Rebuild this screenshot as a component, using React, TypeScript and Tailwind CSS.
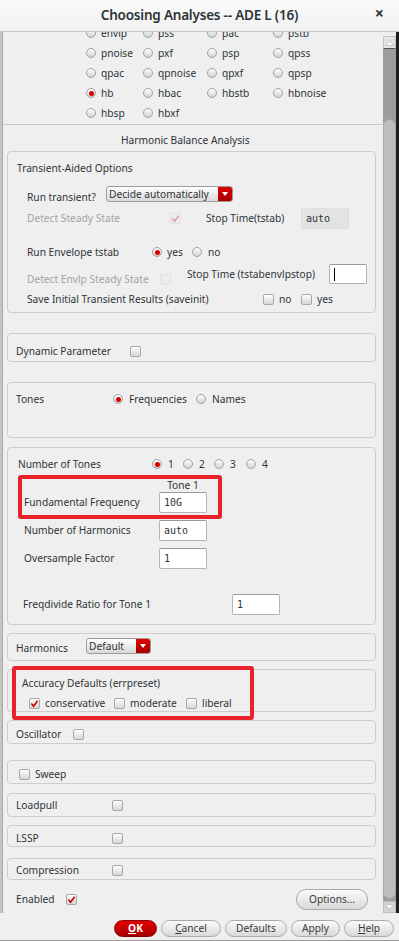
import React from "react";
import clsx from "clsx";

const Radio = ({ on }: { on?: boolean }) => (
  <span className="w-[10px] h-[10px] rounded-full border border-[#a2a2a2] bg-linear-to-b from-white to-[#d2d2d2] flex items-center justify-center shrink-0">
    {on && <span className="w-[5px] h-[5px] rounded-full bg-[#d40000]" />}
  </span>
);

const Check = ({ on, dim }: { on?: boolean; dim?: boolean }) => (
  <span
    className={clsx(
      "w-[11px] h-[11px] rounded-[2px] border flex items-center justify-center shrink-0",
      dim
        ? "border-[#e0e0e0] bg-[#ececec]"
        : "border-[#a8a8a8] bg-linear-to-b from-white to-[#d6d6d6]"
    )}
  >
    {on && (
      <svg width="10" height="9" viewBox="0 0 10 9">
        <path
          d="M1.5 4.5 L4 7.5 L8.5 1.5"
          stroke={dim ? "#d6a3a3" : "#cc0000"}
          strokeWidth="1.8"
          fill="none"
        />
      </svg>
    )}
  </span>
);

const Field = ({
  value,
  className,
  mono,
  disabled,
  cursor,
}: {
  value?: string;
  className: string;
  mono?: boolean;
  disabled?: boolean;
  cursor?: boolean;
}) => (
  <span
    className={clsx(
      "flex items-center pl-[4px] rounded-[2px] border shrink-0",
      disabled
        ? "bg-[#e3e3e3] border-[#dedede]"
        : "bg-white border-[#b4b4b4] border-t-[#9a9a9a]",
      mono && "font-['DejaVu_Sans_Mono',monospace] text-[10px]",
      className
    )}
  >
    {value}
    {cursor && <span className="w-px h-[13px] bg-black" />}
  </span>
);

const Dropdown = ({ label, className }: { label: string; className: string }) => (
  <span
    className={clsx(
      "flex items-stretch rounded-[3px] border border-[#9c9c9c] bg-linear-to-b from-white to-[#d8d8d8] overflow-hidden shrink-0",
      className
    )}
  >
    <span className="flex-1 pl-[2px] leading-[14px]">{label}</span>
    <span className="w-[14px] bg-linear-to-b from-[#de0000] to-[#a80000] flex items-center justify-center">
      <svg width="6" height="4" viewBox="0 0 6 4">
        <path d="M0 0 H6 L3 4 Z" fill="white" />
      </svg>
    </span>
  </span>
);

const Box = ({ className, children }: { className?: string; children: React.ReactNode }) => (
  <div className={clsx("relative ml-[4px] w-[369px] border border-[#cdcdcd] rounded-[4px]", className)}>
    {children}
  </div>
);

const Pill = ({ children, className }: { children: React.ReactNode; className?: string }) => (
  <span
    className={clsx(
      "h-[17px] flex items-center justify-center rounded-full border border-[#a9a9a9] bg-linear-to-b from-[#fbfbfb] to-[#d9d9d9] text-[#3a3a3a]",
      className
    )}
  >
    {children}
  </span>
);

const grid = [
  ["envlp", "pss", "pac", "pstb"],
  ["pnoise", "pxf", "psp", "qpss"],
  ["qpac", "qpnoise", "qpxf", "qpsp"],
  ["hb", "hbac", "hbstb", "hbnoise"],
  ["hbsp", "hbxf"],
];

export default function App() {
  return (
    <div className="w-[399px] h-[941px] bg-[#efefef] font-['Noto_Sans',sans-serif] text-[10.2px] leading-[15px] text-[#2e3436] overflow-hidden">
      {/* title bar */}
      <div className="h-[32px] flex items-center justify-center relative bg-linear-to-b from-[#fafafa] to-[#f1f1f1] border-b border-[#c6c6c6]">
        <span className="text-[13.5px] font-semibold text-[#2e3436] tracking-[-0.2px]">
          Choosing Analyses -- ADE L (16)
        </span>
        <span className="absolute right-[15px] top-[6px] text-[16px] font-bold">×</span>
      </div>

      <div className="flex h-[881px]">
        <div className="w-[3px] bg-[#c4c4c4] border-r border-[#a9a9a9]" />

        {/* scroll content */}
        <div className="w-[380px] overflow-hidden flex flex-col">
          <div className="-mt-[9px] pl-[83px]">
            {grid.map((row, i) => (
              <div key={i} className="grid grid-cols-[57px_64px_66px_80px] h-[20px]">
                {row.map((name) => (
                  <span key={name} className="flex items-center gap-[5px]">
                    <Radio on={name === "hb"} />
                    {name}
                  </span>
                ))}
              </div>
            ))}
          </div>
          <div className="mt-[1px] h-px bg-[#c9c9c9]" />
          <div className="h-[26px] pt-[8px] pl-[118px]">Harmonic Balance Analysis</div>

          {/* transient-aided options */}
          <Box className="pt-[9px] pb-[5px]">
            <div className="pl-[9px] h-[16px]">Transient-Aided Options</div>
            <div className="pl-[19px] mt-[8px] flex items-start">
              <span className="w-[79px] mt-[5px]">Run transient?</span>
              <Dropdown label="Decide automatically" className="w-[127px] h-[16px] mt-[1px]" />
            </div>
            <div className="pl-[19px] mt-[3px] flex items-center h-[21px]">
              <span className="w-[143px] text-[#a3a3a3]">Detect Steady State</span>
              <Check on dim />
              <span className="ml-[25px] w-[95px]">Stop Time(tstab)</span>
              <Field value="auto" mono disabled className="w-[48px] h-[21px]" />
            </div>
            <div className="pl-[19px] mt-[15px] flex items-center h-[16px]">
              <span className="w-[125px]">Run Envelope tstab</span>
              <Radio on />
              <span className="ml-[5px] w-[25px]">yes</span>
              <Radio />
              <span className="ml-[6px]">no</span>
            </div>
            <div className="pl-[19px] mt-[4px] flex items-start">
              <span className="w-[133px] mt-[8px] text-[#a3a3a3]">Detect Envlp Steady State</span>
              <span className="mt-[10px]">
                <Check dim />
              </span>
              <span className="ml-[16px] w-[142px] mt-[3px]">Stop Time (tstabenvlpstop)</span>
              <Field cursor className="w-[38px] h-[20px]" />
            </div>
            <div className="pl-[19px] mt-[4px] flex items-center h-[16px]">
              <span className="w-[236px]">Save Initial Transient Results (saveinit)</span>
              <Check />
              <span className="ml-[5px] w-[22px]">no</span>
              <Check />
              <span className="ml-[5px]">yes</span>
            </div>
          </Box>

          <Box className="mt-[20px] pt-[9px] pb-[2px] pl-[8px]">
            <div className="flex items-center h-[16px]">
              <span className="w-[114px]">Dynamic Parameter</span>
              <Check />
            </div>
          </Box>

          <Box className="mt-[20px] pt-[8px] pb-[30px] pl-[8px]">
            <div className="flex items-center h-[16px]">
              <span className="w-[97px]">Tones</span>
              <Radio on />
              <span className="ml-[6px] w-[67px]">Frequencies</span>
              <Radio />
              <span className="ml-[6px]">Names</span>
            </div>
          </Box>

          {/* tones */}
          <Box className="mt-[9px] pt-[8px] pb-[9px]">
            <div className="pl-[10px] flex items-center h-[16px]">
              <span className="w-[134px]">Number of Tones</span>
              <Radio on />
              <span className="ml-[6px] w-[15px]">1</span>
              <Radio />
              <span className="ml-[6px] w-[15px]">2</span>
              <Radio />
              <span className="ml-[6px] w-[16px]">3</span>
              <Radio />
              <span className="ml-[6px]">4</span>
            </div>
            <div className="pl-[151px] mt-[7px] h-[13px] leading-[13px]">
              <span className="block w-[48px] text-center">Tone 1</span>
            </div>
            <div className="pl-[16px] flex items-center">
              <span className="w-[135px]">Fundamental Frequency</span>
              <Field value="10G" mono className="w-[48px] h-[21px]" />
            </div>
            <div className="pl-[16px] mt-[7px] flex items-center">
              <span className="w-[135px]">Number of Harmonics</span>
              <Field value="auto" mono className="w-[48px] h-[21px]" />
            </div>
            <div className="pl-[16px] mt-[7px] flex items-center">
              <span className="w-[135px]">Oversample Factor</span>
              <Field value="1" mono className="w-[48px] h-[21px]" />
            </div>
            <div className="pl-[15px] mt-[25px] flex items-center">
              <span className="w-[209px]">Freqdivide Ratio for Tone 1</span>
              <Field value="1" mono className="w-[48px] h-[21px]" />
            </div>
            <div className="absolute left-[10px] top-[27px] w-[204px] h-[44px] border-[4px] border-[#e8232d] rounded-[3px]" />
          </Box>

          <Box className="mt-[8px] pb-[4px] pl-[8px]">
            <div className="flex items-start">
              <span className="w-[70px] mt-[7px]">Harmonics</span>
              <Dropdown label="Default" className="w-[65px] h-[16px] mt-[4px]" />
            </div>
          </Box>

          <Box className="mt-[8px] z-10 pt-[6px]">
            <div className="pl-[14px]">Accuracy Defaults (errpreset)</div>
            <div className="pl-[21px] mt-[5px] flex items-center h-[15px]">
              <Check on />
              <span className="ml-[5px] w-[69px]">conservative</span>
              <Check />
              <span className="ml-[5px] w-[56px]">moderate</span>
              <Check />
              <span className="ml-[5px]">liberal</span>
            </div>
            <div className="absolute left-[4px] -top-[4px] w-[242px] h-[54px] border-[4px] border-[#e8232d] rounded-[3px]" />
          </Box>

          <Box className="mt-[8px] pt-[5px] pb-[1px] pl-[8px]">
            <div className="flex items-center h-[16px]">
              <span className="w-[57px]">Oscillator</span>
              <Check />
            </div>
          </Box>

          <Box className="mt-[16px] pt-[5px] pb-[1px] pl-[11px]">
            <div className="flex items-center h-[16px]">
              <Check />
              <span className="ml-[5px]">Sweep</span>
            </div>
          </Box>

          <Box className="mt-[9px] pt-[3px] pb-[3px] pl-[8px]">
            <div className="flex items-center h-[16px]">
              <span className="w-[96px]">Loadpull</span>
              <Check />
            </div>
          </Box>

          <Box className="mt-[8px] pt-[4px] pl-[8px]">
            <div className="flex items-center h-[16px]">
              <span className="w-[96px]">LSSP</span>
              <Check />
            </div>
          </Box>

          <Box className="mt-[11px] pt-[3px] pb-[1px] pl-[8px]">
            <div className="flex items-center h-[16px]">
              <span className="w-[96px]">Compression</span>
              <Check />
            </div>
          </Box>

          <div className="mt-[9px] pl-[13px] pr-[15px] flex items-center h-[21px]">
            <span className="w-[50px]">Enabled</span>
            <Check on />
            <span className="ml-auto w-[72px] h-[21px] flex items-center justify-center rounded-[10px] border border-[#a9a9a9] bg-linear-to-b from-[#fbfbfb] to-[#d9d9d9] text-[#3a3a3a]">
              Options...
            </span>
          </div>
        </div>

        {/* scrollbar */}
        <div className="w-[13px] flex flex-col pt-[4px]">
          <div className="h-[13px] bg-[#e4e4e4] border border-[#c4c4c4] border-b-[#555] flex items-center justify-center">
            <svg width="9" height="6" viewBox="0 0 9 6">
              <path d="M0.5 5.5 L4.5 0.5 L8.5 5.5 Z" fill="#fafafa" stroke="#bdbdbd" strokeWidth="0.8" />
            </svg>
          </div>
          <div className="flex-1 bg-[#9d9d9d] pt-[70px] pb-[2px] flex flex-col">
            <div className="flex-1 bg-[#bdbdbd] border border-[#a9a9a9] rounded-t-[7px] rounded-b-[7px]" />
          </div>
          <div className="h-[12px] bg-[#d4d4d4] border border-[#bdbdbd] flex items-center justify-center">
            <svg width="9" height="6" viewBox="0 0 9 6">
              <path d="M0.5 0.5 L8.5 0.5 L4.5 5.5 Z" fill="#fafafa" stroke="#bdbdbd" strokeWidth="0.8" />
            </svg>
          </div>
        </div>

        <div className="w-[3px] bg-[#1e1e1e]" />
      </div>

      {/* dialog buttons */}
      <div className="h-[28px] flex items-start pt-[7px] justify-end pr-[5px] gap-[4px] border-b border-[#9a9a9a]">
        <span className="w-[43px] h-[17px] flex items-center justify-center rounded-full border border-[#8a0000] bg-linear-to-b from-[#e60000] to-[#a30000] text-white font-bold">
          <span className="underline">O</span>K
        </span>
        <Pill className="w-[60px]">
          <span className="underline">C</span>ancel
        </Pill>
        <Pill className="w-[62px]">Defaults</Pill>
        <Pill className="w-[49px]">Apply</Pill>
        <Pill className="w-[50px]">
          <span className="underline">H</span>elp
        </Pill>
      </div>
    </div>
  );
}
